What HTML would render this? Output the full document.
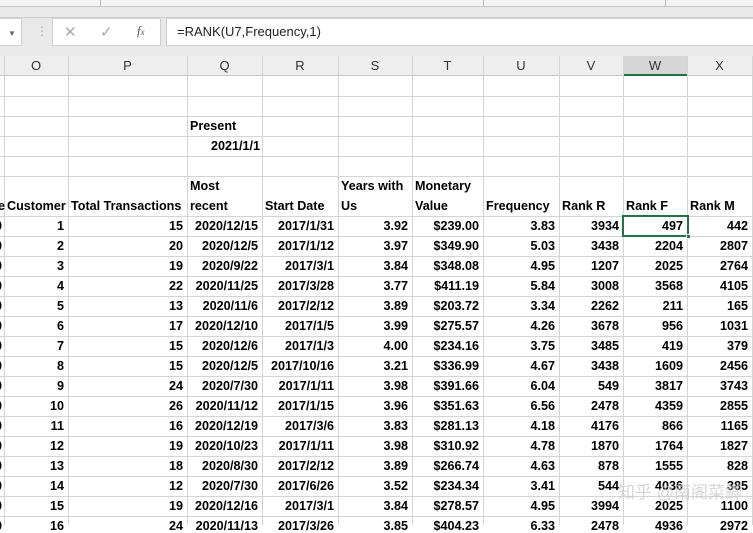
<!DOCTYPE html>
<html><head><meta charset="utf-8"><style>
*{margin:0;padding:0;box-sizing:border-box}
body{width:753px;height:525px;overflow:hidden;background:#fff;position:relative;font-family:"Liberation Sans",Arial,sans-serif}
.a{position:absolute}
.t{position:absolute;font-size:12.6px;font-weight:bold;color:#000;white-space:nowrap;line-height:14px}
.h{position:absolute;font-size:13px;color:#333;text-align:center;top:58px;line-height:16px}
.vl{position:absolute;top:56px;width:1px;height:469px;background:#d4d4d4}
.hl{position:absolute;left:0;width:753px;height:1px;background:#d4d4d4}
</style></head><body>
<div class="a" style="left:0;top:0;width:753px;height:56px;background:#e9e9e9"></div>
<div class="a" style="left:0;top:0;width:753px;height:7px;background:#f3f3f3;border-bottom:1px solid #c8c8c8"></div>
<div class="a" style="left:100px;top:0;width:1px;height:7px;background:#bbb"></div>
<div class="a" style="left:483px;top:0;width:1px;height:7px;background:#bbb"></div>
<div class="a" style="left:665px;top:0;width:1px;height:7px;background:#bbb"></div>
<div class="a" style="left:0;top:17px;width:753px;height:1px;background:#cfcfcf"></div>
<div class="a" style="left:0;top:18px;width:22px;height:28px;background:#fff;border:1px solid #d0d0d0;border-left:none"></div>
<div class="a" style="left:8px;top:29px;font-size:8px;color:#666">▼</div>
<div class="a" style="left:36px;top:24px;font-size:12px;color:#aaa">⋮</div>
<div class="a" style="left:52px;top:18px;width:109px;height:28px;background:#fff;border:1px solid #d0d0d0"></div>
<div class="a" style="left:64px;top:23px;font-size:15px;color:#aaa">✕</div>
<div class="a" style="left:100px;top:23px;font-size:15px;color:#aaa">✓</div>
<div class="a" style="left:137px;top:23px;font-size:13px;color:#555;font-style:italic;font-family:'Liberation Serif',serif">f<span style="font-size:9px">x</span></div>
<div class="a" style="left:166px;top:18px;width:587px;height:28px;background:#fff;border:1px solid #d0d0d0;border-right:none"></div>
<div class="a" style="left:177px;top:24px;font-size:13px;color:#222">=RANK(U7,Frequency,1)</div>
<div class="a" style="left:0;top:56px;width:753px;height:20px;background:#eeeeee;border-bottom:1px solid #c6c6c6"></div>
<div class="a" style="left:623px;top:56px;width:64px;height:20px;background:#d6d6d6;border-bottom:2px solid #217346"></div>
<div class="h" style="left:4px;width:64px">O</div>
<div class="h" style="left:68px;width:119px">P</div>
<div class="h" style="left:187px;width:75px">Q</div>
<div class="h" style="left:262px;width:76px">R</div>
<div class="h" style="left:338px;width:74px">S</div>
<div class="h" style="left:412px;width:71px">T</div>
<div class="h" style="left:483px;width:76px">U</div>
<div class="h" style="left:559px;width:64px">V</div>
<div class="h" style="left:623px;width:64px">W</div>
<div class="h" style="left:687px;width:65px">X</div>
<div id="g"></div>
<script>
var xs=[4,68,187,262,338,412,483,559,623,687,752],h='';
xs.forEach(function(x){h+='<div class="vl" style="left:'+x+'px"></div>'});
var ys=[96,116,136,156,176,216];for(var y=236;y<=516;y+=20)ys.push(y);
ys.forEach(function(y){h+='<div class="hl" style="top:'+y+'px"></div>'});
function L(x,y,s){h+='<div class="t" style="left:'+x+'px;top:'+y+'px">'+s+'</div>'}
function R(r,y,s){h+='<div class="t" style="left:'+(r-80)+'px;width:78px;text-align:right;top:'+y+'px">'+s+'</div>'}
L(190,119,'Present');R(262,139,'2021/1/1');
L(190,179,'Most');L(190,199,'recent');L(265,199,'Start Date');L(341,179,'Years with');L(341,199,'Us');
L(415,179,'Monetary');L(415,199,'Value');L(486,199,'Frequency');L(562,199,'Rank R');L(626,199,'Rank F');L(690,199,'Rank M');
L(-2,199,'e');L(7,199,'Customer');L(71,199,'Total Transactions');
var d=[[1,15,'2020/12/15','2017/1/31','3.92','$239.00','3.83',3934,497,442],
[2,20,'2020/12/5','2017/1/12','3.97','$349.90','5.03',3438,2204,2807],
[3,19,'2020/9/22','2017/3/1','3.84','$348.08','4.95',1207,2025,2764],
[4,22,'2020/11/25','2017/3/28','3.77','$411.19','5.84',3008,3568,4105],
[5,13,'2020/11/6','2017/2/12','3.89','$203.72','3.34',2262,211,165],
[6,17,'2020/12/10','2017/1/5','3.99','$275.57','4.26',3678,956,1031],
[7,15,'2020/12/6','2017/1/3','4.00','$234.16','3.75',3485,419,379],
[8,15,'2020/12/5','2017/10/16','3.21','$336.99','4.67',3438,1609,2456],
[9,24,'2020/7/30','2017/1/11','3.98','$391.66','6.04',549,3817,3743],
[10,26,'2020/11/12','2017/1/15','3.96','$351.63','6.56',2478,4359,2855],
[11,16,'2020/12/19','2017/3/6','3.83','$281.13','4.18',4176,866,1165],
[12,19,'2020/10/23','2017/1/11','3.98','$310.92','4.78',1870,1764,1827],
[13,18,'2020/8/30','2017/2/12','3.89','$266.74','4.63',878,1555,828],
[14,12,'2020/7/30','2017/6/26','3.52','$234.34','3.41',544,4036,385],
[15,19,'2020/12/16','2017/3/1','3.84','$278.57','4.95',3994,2025,1100],
[16,24,'2020/11/13','2017/3/26','3.85','$404.23','6.33',2478,4936,2972]];
d.forEach(function(r,i){var y=219+i*20;R(4,y,'0');for(var j=0;j<10;j++)R(xs[j+1]-2,y,r[j]);});
h+='<div class="a" style="left:622px;top:215px;width:67px;height:22px;border:2px solid #217346"></div>';
h+='<div class="a" style="left:686px;top:234px;width:5px;height:5px;background:#217346;border:1px solid #fff"></div>';
h+='<div class="a" style="left:618px;top:478px;font-size:17px;color:rgba(200,200,200,0.75);font-family:\'Liberation Sans\',\'Noto Sans CJK SC\',sans-serif">知乎 @南阁菜鲫</div>';
document.getElementById('g').innerHTML=h;
</script>
</body></html>
